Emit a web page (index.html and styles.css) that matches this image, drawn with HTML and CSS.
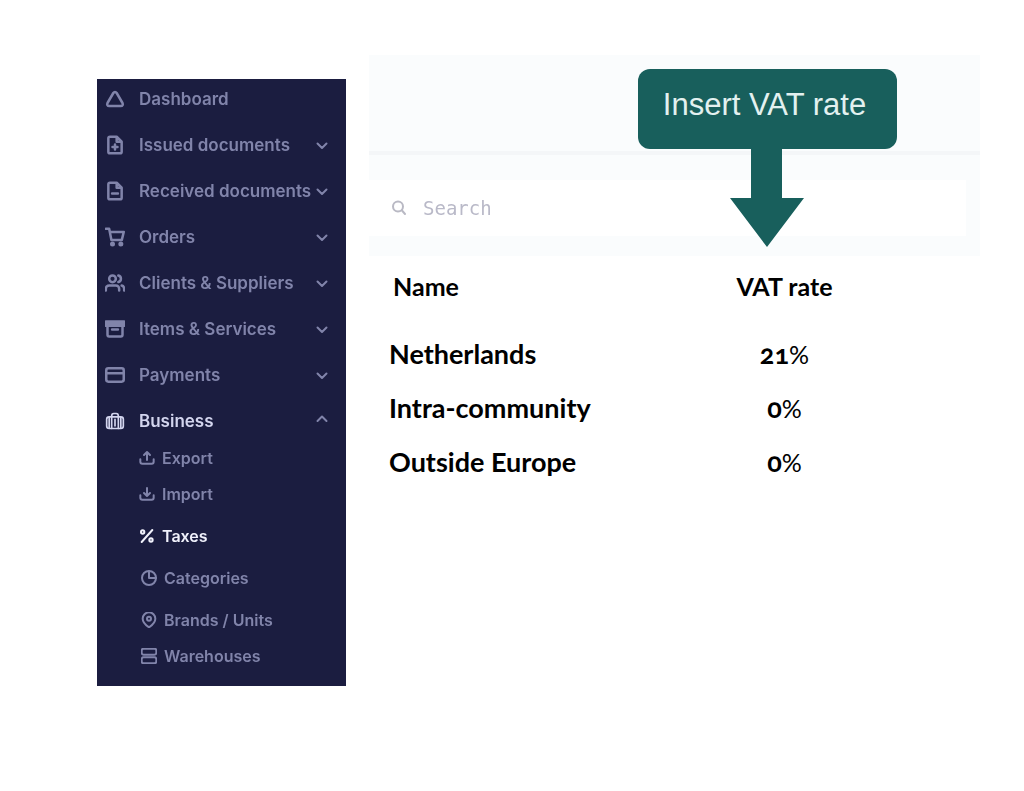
FILE: index.html
```
<!DOCTYPE html>
<html lang="en">
<head>
<meta charset="utf-8">
<title>Taxes</title>
<link rel="stylesheet" href="styles.css">
</head>
<body>
<div class="page">
  <nav class="sidebar" aria-label="Main">
    <ul class="menu">
      <li><a class="item" href="#"><svg class="icon" viewBox="0 0 24 24"><path d="M12 3.500c1 0 1.500.5 2 1.300l7 12c1 2 0 3.700-2 3.700H5c-2 0-3-1.700-2-3.700l7-12c.5-.8 1-1.300 2-1.300z"/></svg><span>Dashboard</span></a></li>
      <li><button class="item"><svg class="icon" viewBox="0 0 24 24"><path d="M14 2H6a2 2 0 0 0-2 2v16a2 2 0 0 0 2 2h12a2 2 0 0 0 2-2V8zM14 2v6h6M12 11.500v6M9 14.500h6"/></svg><span>Issued documents</span><svg class="chevron" viewBox="0 0 12 12"><path d="M1.500 4.500L6 9l4.500-4.500"/></svg></button></li>
      <li><button class="item"><svg class="icon" viewBox="0 0 24 24"><path d="M14 2H6a2 2 0 0 0-2 2v16a2 2 0 0 0 2 2h12a2 2 0 0 0 2-2V8zM14 2v6h6M8.500 15h7"/></svg><span>Received documents</span><svg class="chevron" viewBox="0 0 12 12"><path d="M1.500 4.500L6 9l4.500-4.500"/></svg></button></li>
      <li><button class="item"><svg class="icon" viewBox="0 0 24 24"><path d="M1 2h4l2.700 13.500h12.500L22.500 6H6"/><circle cx="9" cy="20.500" r="1.500"/><circle cx="19" cy="20.500" r="1.500"/></svg><span>Orders</span><svg class="chevron" viewBox="0 0 12 12"><path d="M1.500 4.500L6 9l4.500-4.500"/></svg></button></li>
      <li><button class="item"><svg class="icon" viewBox="0 0 24 24"><path d="M17 21v-2a4 4 0 0 0-4-4H5a4 4 0 0 0-4 4v2M23 21v-2a4 4 0 0 0-3-3.900M16 3.100a4 4 0 0 1 0 7.800"/><circle cx="9" cy="7" r="4"/></svg><span>Clients &amp; Suppliers</span><svg class="chevron" viewBox="0 0 12 12"><path d="M1.500 4.500L6 9l4.500-4.500"/></svg></button></li>
      <li><button class="item"><svg class="icon" viewBox="0 0 24 24"><path d="M3 8v11a2 2 0 0 0 2 2h14a2 2 0 0 0 2-2V8M1 3h22v5H1zM1 5.500h22M8.500 12.500h7"/></svg><span>Items &amp; Services</span><svg class="chevron" viewBox="0 0 12 12"><path d="M1.500 4.500L6 9l4.500-4.500"/></svg></button></li>
      <li><button class="item"><svg class="icon" viewBox="0 0 24 24"><rect x="1.500" y="4" width="21" height="16" rx="2.500"/><path d="M1.500 10h21"/></svg><span>Payments</span><svg class="chevron" viewBox="0 0 12 12"><path d="M1.500 4.500L6 9l4.500-4.500"/></svg></button></li>
      <li><button class="item active"><svg class="icon" viewBox="0 0 24 24"><rect x="2" y="7" width="20" height="14" rx="3"/><path d="M8 21V6c0-2 1-3 2.500-3h3C15 3 16 4 16 6v15M12 10v8M5 8v12M19 8v12"/></svg><span>Business</span><svg class="chevron" viewBox="0 0 12 12"><path d="M1.500 6L6 1.500 10.500 6"/></svg></button></li>
    </ul>
    <div class="submenu">
      <ul class="group">
        <li><a class="subitem" href="#"><svg class="subicon" viewBox="0 0 24 24"><path d="M2 14v3.500a3 3 0 0 0 3 3h14a3 3 0 0 0 3-3V14M12 15V3M7.500 7.500L12 3l4.500 4.500"/></svg><span>Export</span></a></li>
        <li><a class="subitem" href="#"><svg class="subicon" viewBox="0 0 24 24"><path d="M2 14v3.500a3 3 0 0 0 3 3h14a3 3 0 0 0 3-3V14M12 3v12M7.500 10.500L12 15l4.500-4.500"/></svg><span>Import</span></a></li>
      </ul>
      <ul class="group">
        <li><a class="subitem current" href="#" aria-current="page"><svg class="subicon" viewBox="0 0 24 24"><path d="M20 3L4 21"/><circle cx="5.500" cy="6" r="2.500"/><circle cx="18" cy="18" r="2.500"/></svg><span>Taxes</span></a></li>
      </ul>
      <ul class="group wide">
        <li><a class="subitem" href="#"><svg class="subicon" viewBox="0 0 24 24"><circle cx="12" cy="12" r="10.500"/><path d="M12 1.500V12h10.500"/></svg><span>Categories</span></a></li>
      </ul>
      <ul class="group wide">
        <li><a class="subitem" href="#"><svg class="subicon" viewBox="0 0 24 24"><path d="M21.500 10c0 6.500-9.500 13-9.500 13s-9.500-6.500-9.500-13a9.500 9.500 0 0 1 19 0z"/><circle cx="12" cy="10" r="3"/></svg><span>Brands / Units</span></a></li>
        <li><a class="subitem" href="#"><svg class="subicon" viewBox="0 0 24 24"><rect x="1" y="1" width="22" height="9" rx="3"/><rect x="1" y="14" width="22" height="9" rx="3"/></svg><span>Warehouses</span></a></li>
      </ul>
    </div>
  </nav>

  <main class="content">
    <section class="panel">
      <div class="panel-head"></div>
      <label class="search">
        <svg class="search-icon" viewBox="0 0 16 16"><circle cx="7" cy="6.500" r="5"/><path d="M11 10.500l3 3.500"/></svg>
        <input type="search" placeholder="Search" aria-label="Search">
      </label>
      <div class="callout">
        <div class="callout-box">Insert VAT rate</div>
        <svg class="arrow" viewBox="0 0 74 98"><path d="M21 0h31v49h22L37 98 0 49h21z"/></svg>
      </div>
    </section>
    <table class="rates">
      <thead>
        <tr><th class="name" scope="col">Name</th><th class="rate" scope="col">VAT rate</th></tr>
      </thead>
      <tbody>
        <tr><td class="name">Netherlands</td><td class="rate">21<span class="percent">%</span></td></tr>
        <tr><td class="name">Intra-community</td><td class="rate">0<span class="percent">%</span></td></tr>
        <tr><td class="name">Outside Europe</td><td class="rate">0<span class="percent">%</span></td></tr>
      </tbody>
    </table>
  </main>
</div>
</body>
</html>
```

FILE: styles.css
```
* { box-sizing: border-box; }

body {
  margin: 0;
  background: #fff;
  color: #000;
  font-family: Lato, "Open Sans", sans-serif;
}

.page {
  display: grid;
  grid-template-columns: 249px 1fr;
  gap: 23px;
  align-items: start;
  padding: 55px 44px 55px 97px;
}

ul { margin: 0; padding: 0; list-style: none; }

.sidebar {
  margin-top: 24px;
  padding-bottom: 12px;
  background: #1b1d40;
  color: #8184aa;
  font-family: Inter, sans-serif;
}

.item,
.subitem {
  display: flex;
  align-items: center;
  width: 100%;
  border: 0;
  background: none;
  color: inherit;
  font: inherit;
  font-weight: 600;
  text-align: left;
  text-decoration: none;
  white-space: nowrap;
  filter: blur(0.7px);
}

.item {
  height: 46px;
  padding: 0 18px 0 8px;
  gap: 14px;
  font-size: 17px;
}

.item span { flex: 1; width: 0; }

.menu { margin-top: -3px; }

.icon { flex: none; width: 20px; height: 20px; }
.chevron { flex: none; width: 12px; height: 12px; margin-left: -14px; }
.subicon { flex: none; width: 16px; height: 16px; }

.icon, .chevron, .subicon, .search-icon {
  fill: none;
  stroke: currentColor;
  stroke-width: 2;
  stroke-linecap: round;
  stroke-linejoin: round;
}

.icon, .subicon { stroke-width: 3; }

.active { color: #d3d5ee; }
.active .icon { stroke-width: 2; }
.active .chevron { color: #8184aa; }
.current { color: #f0f1fb; }

.submenu { display: grid; gap: 6px; margin-top: -4px; padding-left: 42px; }

.subitem { height: 36px; gap: 7px; font-size: 16px; }
.wide .subitem { padding-left: 2px; }

.panel {
  position: relative;
  padding-bottom: 20px;
  background: #fafcfd;
}

.panel-head {
  height: 100px;
  border-bottom: 4px solid #f4f6f8;
}

.search {
  display: flex;
  align-items: center;
  gap: 16px;
  height: 56px;
  margin: 25px 14px 0 0;
  padding-left: 22px;
  background: #fff;
  color: #b9b9c4;
  filter: blur(0.6px);
}

.search-icon { width: 16px; height: 16px; }

.search input {
  flex: 1;
  padding: 0;
  border: 0;
  outline: 0;
  background: none;
  font: 19px "DejaVu Sans Mono", monospace;
}

.search input::placeholder { color: #b9b9c8; opacity: 1; }

.callout {
  position: absolute;
  top: 14px;
  left: 44%;
  display: flex;
  flex-direction: column;
  align-items: center;
}

.callout-box {
  padding: 18px 31px 26px 25px;
  border-radius: 12px;
  background: #185f5c;
  color: #e3f1f0;
  font: 31px/36px "Liberation Sans", Arial, sans-serif;
  white-space: nowrap;
}

.arrow { width: 74px; height: 98px; fill: #185f5c; }

.rates {
  width: 85%;
  border-collapse: collapse;
  table-layout: fixed;
}

.rates th { height: 71px; padding: 0 0 12px; font-size: 25px; line-height: 28px; }
.rates td { height: 54px; padding: 0; font-size: 27px; line-height: 32px; font-weight: 700; }
.rates .name { width: 60%; padding-left: 20px; text-align: left; }
.rates .rate { text-align: center; font-variant-numeric: oldstyle-nums; }
.rates th.name { padding-left: 24px; }
.rates .percent { font-size: 25px; font-weight: 400; }
```
